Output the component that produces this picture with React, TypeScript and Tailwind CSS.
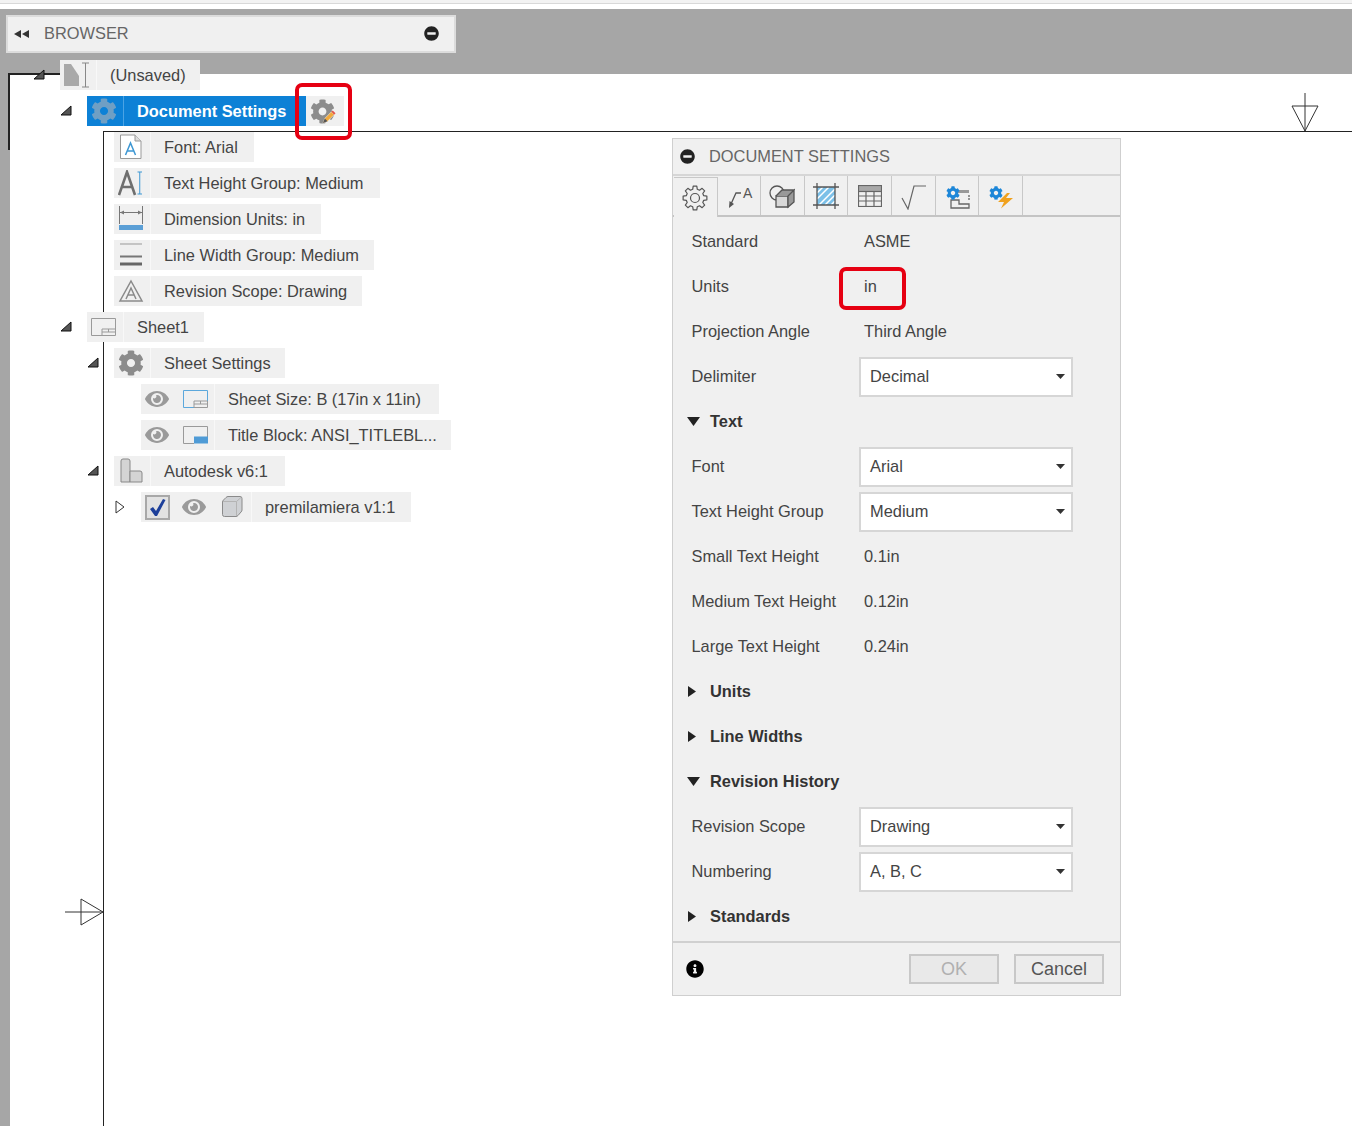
import React from "react";
import { FaCog, FaEye, FaInfoCircle, FaMinusCircle } from "react-icons/fa";

const Gear = ({ className }: { className?: string }) => <FaCog className={className} />;

function Collapse() {
  return <FaMinusCircle className="h-[15px] w-[15px] text-[#222]" />;
}

function Eye() {
  return <FaEye className="h-[24px] w-[24px] text-[#9a9a9a]" />;
}

function Toggle() {
  return (
    <svg width="13" height="11" viewBox="0 0 13 11">
      <path d="M1 10 L11 1 V10 Z" fill="#555" stroke="#111" strokeWidth="1" />
    </svg>
  );
}

function SheetIcon({ blueBorder, blueBlock }: { blueBorder?: boolean; blueBlock?: boolean }) {
  const c = blueBorder ? "#5ca8dc" : "#9a9a9a";
  return (
    <svg width="25" height="18" viewBox="0 0 25 18" fill="none">
      <path d="M24.500 .5 H.5 V17.500 H11 M24.500 .5 V11" stroke={c} />
      {blueBlock ? (
        <rect x="11" y="10.500" width="14" height="7" fill="#4f9bd6" />
      ) : (
        <path d="M11 17.500 V11 H24.500 V17.500 H11 M11 14 H24.500 M17.500 11 V14" stroke="#9a9a9a" />
      )}
    </svg>
  );
}

const icons = {
  drawing: (
    <svg width="26" height="26" viewBox="0 0 26 26" fill="none">
      <path d="M0 2 H7 L15 14 V24 H0 Z" fill="#a9a9a9" />
      <path d="M18 1 H25 M21.500 1 V25 M18 25 H25" stroke="#888" />
    </svg>
  ),
  font: (
    <svg width="24" height="26" viewBox="0 0 24 26" fill="none">
      <path d="M1.500 1 H16 L22 7 V24.500 H1.500 Z" fill="#fff" stroke="#999" />
      <path d="M16 1 V7 H22" fill="#ddd" stroke="#999" />
      <path d="M6.500 21 L11.500 9 L16.500 21 M8.500 17 H14.500" stroke="#3d97d3" strokeWidth="1.500" />
    </svg>
  ),
  textHeight: (
    <svg width="25" height="26" viewBox="0 0 25 26" fill="none">
      <path d="M1 25 L9 2 L17 25 M4 17 H14" stroke="#6f6f6f" strokeWidth="2.600" />
      <path d="M19.500 2 H24 M21.750 2 V24 M19.500 24 H24" stroke="#3d97d3" />
    </svg>
  ),
  dimension: (
    <svg width="26" height="26" viewBox="0 0 26 26" fill="none">
      <path d="M1.500 0 V18 M24.500 0 V18" stroke="#777" />
      <path d="M2 6.500 H24" stroke="#777" />
      <path d="M2 6.500 L6 4.500 V8.500 Z M24 6.500 L20 4.500 V8.500 Z" fill="#777" />
      <rect x="1" y="19" width="24" height="5" fill="#5b9fd6" />
    </svg>
  ),
  lineWidth: (
    <svg width="22" height="24" viewBox="0 0 22 24" fill="none">
      <path d="M0 1 H22" stroke="#999" />
      <path d="M0 13.500 H22" stroke="#777" strokeWidth="2" />
      <path d="M0 21 H22" stroke="#666" strokeWidth="3" />
    </svg>
  ),
  revision: (
    <svg width="26" height="24" viewBox="0 0 26 24" fill="none" stroke="#8a8a8a">
      <path d="M13 2 L24 22 H2 Z" strokeWidth="1.500" />
      <path d="M8 20 L13 9 L18 20 M10 16 H16" strokeWidth="1.500" />
    </svg>
  ),
  component: (
    <svg width="24" height="26" viewBox="0 0 24 26">
      <path d="M2 24 V3 Q2 1 4 1 H9 Q11 1 11 3 V24 Z" fill="#d4d4d4" stroke="#888" />
      <path d="M11 24 V13 H21 Q23 13 23 15 V24 Z" fill="#d4d4d4" stroke="#888" />
    </svg>
  ),
  cube: (
    <svg width="22" height="22" viewBox="0 0 22 22">
      <path d="M1.500 6 Q1.500 5 2.500 4 L5 1.500 Q6 .5 7 .5 H19 Q21 .5 21 2.500 V14 Q21 15 20 16 L17 19.500 Q16 20.500 15 20.500 H3.500 Q1.500 20.500 1.500 18.500 Z" fill="#cfd1d4" stroke="#8a8a8a" />
      <path d="M2 5.500 H15.500 V20 M15.500 5.500 L20.500 1" fill="none" stroke="#b4b4b4" />
    </svg>
  ),
  check: (
    <svg width="17" height="19" viewBox="0 0 17 19">
      <path d="M1 11 L4 9 L7 13 L14 1 L16.500 2 L8 18 H6 Z" fill="#1d3f9a" />
    </svg>
  ),
};

type RowProps = {
  left: string;
  width: string;
  icon: React.ReactNode;
  cell: string;
  label: React.ReactNode;
  toggle?: React.ReactNode;
};

function TreeRow({ left, width, icon, cell, label, toggle }: RowProps) {
  return (
    <div className={`relative flex h-[30px] items-center bg-[#f0f0f0] text-[16.400px] text-[#444] ${left} ${width}`}>
      {toggle && <span className="absolute left-[-27px] top-[9px] flex">{toggle}</span>}
      <span className={`flex h-full shrink-0 items-center border-r border-[#f8f8f8] ${cell}`}>{icon}</span>
      <span className="whitespace-nowrap">{label}</span>
    </div>
  );
}

const iconCell = "w-[37px] mr-[13px] justify-center pr-[3px]";

function Tree() {
  return (
    <div className="absolute left-0 top-[60px] flex flex-col gap-[6px]">
      <TreeRow left="ml-[60px]" width="w-[140px]" cell={iconCell} icon={icons.drawing} label="(Unsaved)" toggle={<Toggle />} />
      <div className="ml-[87px] flex h-[30px] items-center">
        <div className="relative flex h-full w-[219px] items-center bg-[#0d81d6] text-[16.400px] font-bold text-white">
          <span className="absolute left-[-27px] top-[9px] flex"><Toggle /></span>
          <span className="mr-[13px] flex h-full w-[37px] items-center justify-center border-r border-[#4ba3e4] pr-[3px]">
            <Gear className="h-[26px] w-[26px] text-[#6f9fc4]" />
          </span>
          <span>Document Settings</span>
        </div>
        <span className="relative flex h-full w-[38px] items-center bg-[#f0f0f0] pl-[4px]">
          <Gear className="h-[25px] w-[25px] text-[#8c8c8c]" />
          <svg className="absolute left-[16px] top-[14px]" width="14" height="14" viewBox="0 0 15 15">
            <path d="M1 14 L3 9 L10 2 L13 5 L6 12 Z" fill="#f2a93b" stroke="#fff" strokeWidth=".5" />
            <path d="M10 2 L13 5 L14.500 3.500 L11.500 .5 Z" fill="#e2574c" />
            <path d="M1 14 L3 9 L6 12 Z" fill="#555" />
          </svg>
        </span>
      </div>
      <TreeRow left="ml-[114px]" width="w-[140px]" cell={iconCell} icon={icons.font} label="Font: Arial" />
      <TreeRow left="ml-[114px]" width="w-[266px]" cell={iconCell} icon={icons.textHeight} label="Text Height Group: Medium" />
      <TreeRow left="ml-[114px]" width="w-[207px]" cell={iconCell} icon={icons.dimension} label="Dimension Units: in" />
      <TreeRow left="ml-[114px]" width="w-[260px]" cell={iconCell} icon={icons.lineWidth} label="Line Width Group: Medium" />
      <TreeRow left="ml-[114px]" width="w-[248px]" cell={iconCell} icon={icons.revision} label="Revision Scope: Drawing" />
      <TreeRow left="ml-[87px]" width="w-[117px]" cell={iconCell} icon={<SheetIcon />} label="Sheet1" toggle={<Toggle />} />
      <TreeRow left="ml-[114px]" width="w-[171px]" cell={iconCell} icon={<Gear className="h-[26px] w-[26px] text-[#8c8c8c]" />} label="Sheet Settings" toggle={<Toggle />} />
      <TreeRow
        left="ml-[141px]"
        width="w-[298px]"
        cell="w-[74px] mr-[13px] gap-[14px] pl-[4px]"
        icon={<><Eye /><SheetIcon blueBorder /></>}
        label="Sheet Size: B (17in x 11in)"
      />
      <TreeRow
        left="ml-[141px]"
        width="w-[310px]"
        cell="w-[74px] mr-[13px] gap-[14px] pl-[4px]"
        icon={<><Eye /><SheetIcon blueBlock /></>}
        label="Title Block: ANSI_TITLEBL..."
      />
      <TreeRow
        left="ml-[114px]"
        width="w-[171px]"
        cell={iconCell}
        icon={icons.component}
        label="Autodesk v6:1"
        toggle={<Toggle />}
      />
      <TreeRow
        left="ml-[141px]"
        width="w-[270px]"
        cell="w-[111px] mr-[13px] gap-[12px] pl-[4px]"
        icon={
          <>
            <span className="flex h-[25px] w-[25px] items-center justify-center border-2 border-[#a8a8a8] bg-[#e2e2e2]">
              {icons.check}
            </span>
            <Eye />
            <span className="ml-[3px] flex">{icons.cube}</span>
          </>
        }
        label="premilamiera v1:1"
        toggle={
          <svg width="10" height="14" viewBox="0 0 10 14" className="ml-px mt-[-1px]">
            <path d="M1 1 L9 7 L1 13 Z" fill="#fff" stroke="#333" />
          </svg>
        }
      />
    </div>
  );
}

function Select({ value }: { value: string }) {
  return (
    <div className="flex h-[40px] w-[214px] items-center justify-between border-2 border-[#d6d6d6] bg-white pl-[9px] pr-[6px] text-[16.400px] text-[#444]">
      {value}
      <svg width="9" height="5" viewBox="0 0 9 5"><path d="M0 0 H9 L4.500 5 Z" fill="#333" /></svg>
    </div>
  );
}

function Field({ label, value, select }: { label: string; value?: string; select?: string }) {
  return (
    <div className="flex h-[45px] items-center pl-[18.500px] text-[16.400px] text-[#444]">
      <span className="w-[167.500px] shrink-0">{label}</span>
      {select ? <Select value={select} /> : <span className="pl-[5px]">{value}</span>}
    </div>
  );
}

function Section({ label, open }: { label: string; open?: boolean }) {
  return (
    <div className="flex h-[45px] items-center pl-[14px] text-[16.400px] font-bold text-[#333]">
      <span className="flex w-[23px] shrink-0">
        <svg width="13" height="13" viewBox="0 0 13 13">
          {open ? <path d="M0 2 H13 L6.500 11 Z" fill="#222" /> : <path d="M1 1 L9 6.500 L1 12 Z" fill="#222" />}
        </svg>
      </span>
      {label}
    </div>
  );
}

// eight tooth outline gear for the first tab
function gearPath(cx: number, cy: number, outer: number, inner: number) {
  const pts: string[] = [];
  for (let i = 0; i < 8; i++) {
    const a = (i * Math.PI) / 4;
    const offsets: [number, number][] = [[-0.26, inner], [-0.15, outer], [0.15, outer], [0.26, inner]];
    offsets.forEach(([d, r]) => {
      pts.push(`${(cx + r * Math.cos(a + d)).toFixed(2)} ${(cy + r * Math.sin(a + d)).toFixed(2)}`);
    });
  }
  return "M" + pts.join(" L") + " Z";
}

const tabIcons: React.ReactNode[] = [
  <svg key="gear" width="26" height="26" viewBox="0 0 26 26" fill="none" stroke="#555" strokeWidth="1.200" strokeLinejoin="round">
    <path d={gearPath(13, 13, 12, 9)} />
    <circle cx="13" cy="13" r="4.500" />
  </svg>,
  <svg key="arrow" width="28" height="26" viewBox="0 0 28 26" fill="none">
    <path d="M6 21 L11 10 H16" stroke="#555" strokeWidth="1.300" />
    <path d="M4 25 L4.500 18 L9 21 Z" fill="#555" />
    <text x="18" y="15" fontSize="14" fill="#555" fontFamily="Liberation Sans, sans-serif">A</text>
  </svg>,
  <svg key="shape" width="26" height="26" viewBox="0 0 26 26" fill="none" stroke="#555" strokeWidth="1.300">
    <circle cx="8" cy="10" r="7" fill="#f0f0f0" />
    <path d="M7 13 H19 V24 H7 Z" fill="#d8d8d8" />
    <path d="M19 13 L25 7 H13 L7 13 M25 7 V19 L19 24 V13 Z" fill="#999" />
  </svg>,
  <svg key="hatch" width="26" height="26" viewBox="0 0 26 26" fill="none">
    <rect x="4" y="4" width="18" height="18" fill="#7cc0e8" />
    <path d="M4 10 L10 4 M4 16 L16 4 M6 22 L22 6 M12 22 L22 12 M18 22 L22 18" stroke="#fff" strokeWidth="1.500" />
    <path d="M0 4 H26 M0 22 H26 M4 0 V26 M22 0 V26" stroke="#555" strokeWidth="1.300" />
  </svg>,
  <svg key="table" width="24" height="22" viewBox="0 0 24 22" fill="none" stroke="#666" strokeWidth="1.200">
    <rect x=".5" y=".5" width="23" height="21" />
    <rect x=".5" y=".5" width="23" height="6" fill="#a8a8a8" />
    <path d="M0 11 H24 M0 16 H24 M8 7 V22 M16 7 V22" />
  </svg>,
  <svg key="root" width="28" height="28" viewBox="0 0 28 28" fill="none" stroke="#666" strokeWidth="1.200">
    <path d="M3 16 L9 27 L15 4 H27" />
  </svg>,
  <svg key="blue-gear" width="26" height="26" viewBox="0 0 26 26" fill="none">
    <path d="M14 7 H25 V10 H14 Z" fill="#999" />
    <path d="M25 12 V17" stroke="#666" strokeWidth="1.300" strokeDasharray="2 1" />
    <path d="M7 17 H15 V21 H25 V25 H7 Z" stroke="#666" strokeWidth="1.300" />
  </svg>,
  <svg key="bolt" width="26" height="26" viewBox="0 0 26 26">
    <path d="M20 10 L11 19 H17 L14 25.500 L26 15 H19 L23 10 Z" fill="#f0a21f" />
  </svg>,
];

function Tabs() {
  return (
    <div className="flex h-[41px] items-stretch border-b-2 border-[#c4c4c4] pl-px">
      {tabIcons.map((ic, i) => (
        <div
          key={i}
          className={`relative flex w-[43.600px] items-center justify-center border-r border-[#c8c8c8] ${i === 0 ? "mb-[-2px] mt-px border-t bg-[#f0f0f0]" : ""}`}
        >
          {ic}
          {(i === 6 || i === 7) && <FaCog className="absolute left-[10px] top-[10px] h-[14px] w-[14px] text-[#1c86d8]" />}
        </div>
      ))}
    </div>
  );
}

function SettingsDialog() {
  return (
    <div className="absolute left-[672px] top-[138px] w-[449px] border border-[#cfcfcf] bg-[#f0f0f0] text-[16.400px]">
      <div className="flex h-[37px] items-center gap-[14px] border-b-2 border-[#d6d6d6] pl-[7px] text-[#666]">
        <Collapse />
        <span>DOCUMENT SETTINGS</span>
      </div>
      <Tabs />
      <div className="pt-[2px]">
        <Field label="Standard" value="ASME" />
        <Field label="Units" value="in" />
        <Field label="Projection Angle" value="Third Angle" />
        <Field label="Delimiter" select="Decimal" />
        <Section label="Text" open />
        <Field label="Font" select="Arial" />
        <Field label="Text Height Group" select="Medium" />
        <Field label="Small Text Height" value="0.1in" />
        <Field label="Medium Text Height" value="0.12in" />
        <Field label="Large Text Height" value="0.24in" />
        <Section label="Units" />
        <Section label="Line Widths" />
        <Section label="Revision History" open />
        <Field label="Revision Scope" select="Drawing" />
        <Field label="Numbering" select="A, B, C" />
        <Section label="Standards" />
      </div>
      <div className="mt-[2px] flex h-[54px] items-center justify-between border-t-2 border-[#d0d0d0] pl-[13px] pr-[16px]">
        <FaInfoCircle className="h-[18px] w-[18px] text-black" />
        <div className="flex gap-[15px]">
          <button className="h-[30px] w-[90px] border-2 border-[#c8c8c8] bg-[#e9e9e9] text-[18px] text-[#b0b0b0]">OK</button>
          <button className="h-[30px] w-[90px] border-2 border-[#c8c8c8] bg-[#ececec] text-[18px] text-[#555]">Cancel</button>
        </div>
      </div>
    </div>
  );
}

export default function App() {
  return (
    <div className="relative flex h-[1126px] w-[1352px] flex-col overflow-hidden bg-white font-['Liberation_Sans',Arial,sans-serif]">
      <div className="h-[9px] border-t-[3px] border-[#f2f2f2]">
        <div className="h-px bg-[#d8d8d8]" />
      </div>
      <div className="h-[65px] bg-[#a6a6a6] pl-[6px] pt-[6px]">
        <div className="flex h-[38px] w-[450px] items-center border-2 border-[#dcdcdc] bg-[#f0f0f0] pb-px pl-[6px] pr-[15px] text-[16.400px] text-[#666]">
          <svg width="15" height="8" viewBox="0 0 15 8" className="mr-[15px]"><path d="M7 0 V8 L0 4 Z M15 0 V8 L8 4 Z" fill="#333" /></svg>
          <span>BROWSER</span>
          <span className="ml-auto flex"><Collapse /></span>
        </div>
      </div>
      <div className="flex flex-1">
        <div className="w-[10px] bg-[#a6a6a6]" />
        <div className="flex-1" />
      </div>

      {/* drawing border + datum marks */}
      <div className="absolute left-[8px] top-[73px] h-[77px] w-[1.500px] bg-[#222]" />
      <div className="absolute left-[8px] top-[73px] h-[1.500px] w-[52px] bg-[#222]" />
      <div className="absolute bottom-0 left-[103px] top-[131px] w-px bg-[#222]" />
      <div className="absolute left-[103px] right-0 top-[131px] h-px bg-[#222]" />
      <svg className="absolute left-[1290px] top-[92px]" width="30" height="40" viewBox="0 0 30 40" fill="none" stroke="#333">
        <path d="M15 1 V39 M2 14 H28 L15 39 Z" />
      </svg>
      <svg className="absolute left-[64px] top-[898px]" width="40" height="28" viewBox="0 0 40 28" fill="none" stroke="#333">
        <path d="M1 14 H39 M17 1 V27 L39 14 Z" />
      </svg>

      <Tree />
      <SettingsDialog />

      {/* red annotation boxes */}
      <div className="absolute left-[295px] top-[83px] h-[57px] w-[57px] rounded-[7px] border-4 border-[#e60012]" />
      <div className="absolute left-[839px] top-[267px] h-[43px] w-[67px] rounded-[7px] border-4 border-[#e60012]" />
    </div>
  );
}
